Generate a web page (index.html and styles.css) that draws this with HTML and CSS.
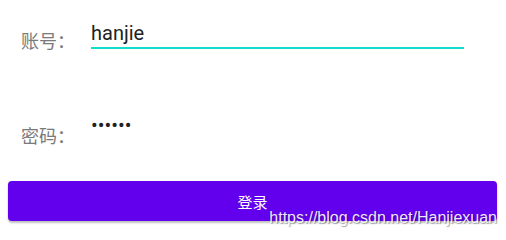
FILE: index.html
```html
<!DOCTYPE html>
<html lang="zh-CN">
<head>
<meta charset="utf-8">
<title>登录</title>
<link rel="stylesheet" href="styles.css">
</head>
<body>
<main class="form">
  <div class="row row-account">
    <span class="label">账号：</span>
    <div class="field field-focused">hanjie</div>
  </div>
  <div class="row row-password">
    <span class="label">密码：</span>
    <div class="field field-pass">••••••</div>
  </div>
  <button class="login" type="button">登录</button>
</main>
<div class="watermark">https://blog.csdn.net/Hanjiexuan</div>
</body>
</html>
```

FILE: styles.css
```css
html, body {
  margin: 0;
  padding: 0;
  background: #ffffff;
}

body {
  position: relative;
  width: 506px;
  height: 238px;
  overflow: hidden;
  font-family: Roboto, "Noto Sans CJK SC", sans-serif;
}

.form {
  display: flex;
  flex-direction: column;
  padding: 0 9px 0 8px;
}

.row {
  display: flex;
  align-items: flex-start;
  padding-left: 13px;
}

.row-account {
  margin-top: 21px;
}

.row-password {
  margin-top: 60px;
}

.label {
  width: 70px;
  margin-top: 6px;
  font-family: "Noto Sans CJK SC", sans-serif;
  font-size: 18px;
  line-height: 26px;
  color: #7a7a7a;
  white-space: nowrap;
}

.row-password .label {
  margin-top: 9px;
}

.field {
  width: 373px;
  font-family: Roboto, sans-serif;
  font-size: 20px;
  line-height: 24px;
  color: #222222;
  padding-bottom: 2px;
  border-bottom: 2px solid transparent;
}

.field-focused {
  border-bottom-color: #14dccb;
}

.field-pass {
  letter-spacing: 0;
}

.login {
  margin-top: 33px;
  height: 40px;
  width: 100%;
  border: none;
  border-radius: 4px;
  background: #6200ee;
  color: #ffffff;
  font-family: "Noto Sans CJK SC", sans-serif;
  font-size: 15px;
  box-shadow: 0 2px 2px rgba(0, 0, 0, 0.24), 0 0 1px rgba(0, 0, 0, 0.12);
  padding: 0;
}

.watermark {
  position: absolute;
  top: 209px;
  right: 9px;
  font-family: "Liberation Sans", Arial, sans-serif;
  font-size: 16px;
  line-height: 18px;
  color: rgba(255, 255, 255, 0.92);
  text-shadow: 1px 1px 1px rgba(0, 0, 0, 0.35);
  white-space: nowrap;
}
```
